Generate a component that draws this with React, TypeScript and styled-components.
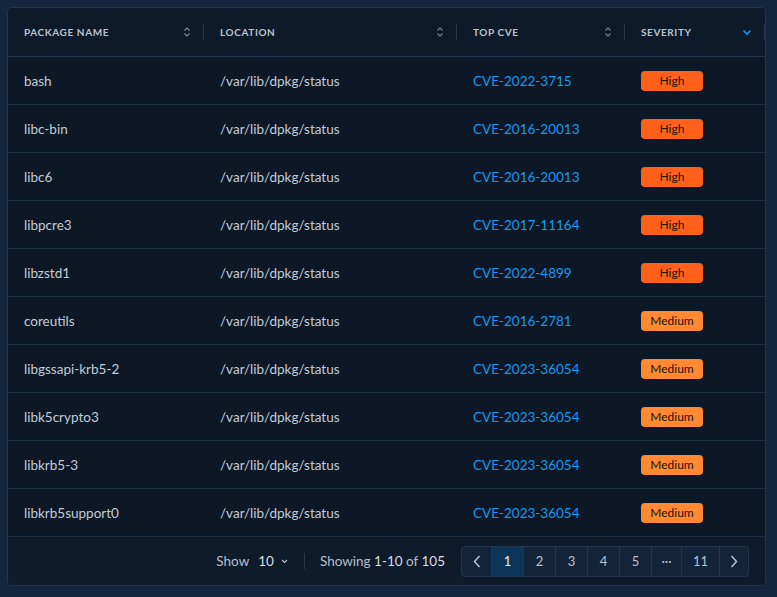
import React from "react";
import styled, { createGlobalStyle } from "styled-components";

const Global = createGlobalStyle`
  html, body { margin: 0; padding: 0; background: #14263d; }
  body { font-family: "Lato", "Noto Sans", sans-serif; }
`;

const Page = styled.div`
  padding: 7px 11px 12px 7px;
  width: 777px;
  height: 597px;
  box-sizing: border-box;
`;

const Card = styled.div`
  width: 759px;
  height: 579px;
  box-sizing: border-box;
  border: 1px solid #22344e;
  border-radius: 5px;
  background: #0c1826;
  overflow: hidden;
  display: flex;
  flex-direction: column;
`;

const Grid = styled.div`
  display: grid;
  grid-template-columns: 196px 253px 168px 1fr;
  box-sizing: border-box;
`;

const HeadRow = styled(Grid)`
  height: 49px;
  border-bottom: 1px solid #22344e;
  background: #0d1a2a;
`;

const HeadCell = styled.div`
  display: flex;
  align-items: center;
  padding-left: 16px;
  font-size: 10px;
  font-weight: 700;
  letter-spacing: 0.6px;
  color: #b9c3cf;
  text-transform: uppercase;
`;

const HeadLabel = styled.span`
  flex: 1;
`;

const Sep = styled.span`
  width: 1px;
  height: 16px;
  background: #26374d;
  margin-left: 12px;
`;

const SortIcon = styled.svg`
  width: 8px;
  height: 12px;
  flex: none;
`;

const Row = styled(Grid)`
  height: 48px;
  border-bottom: 1px solid #1f3049;
`;

const Cell = styled.div`
  display: flex;
  align-items: center;
  padding-left: 16px;
  font-size: 13.5px;
  color: #c3ccd6;
`;

const Link = styled.a`
  color: #1a98f0;
  text-decoration: none;
  font-size: 13.5px;
`;

const Badge = styled.span<{ $level: "High" | "Medium" }>`
  display: inline-flex;
  align-items: center;
  justify-content: center;
  width: 62px;
  height: 20px;
  border-radius: 4px;
  font-size: 12px;
  color: #1b1410;
  background: ${(p) => (p.$level === "High" ? "#ff611a" : "#ff8a33")};
`;

const Body = styled.div`
  flex: 1;
`;

const Footer = styled.div`
  height: 48px;
  display: flex;
  align-items: center;
  justify-content: flex-end;
  padding-right: 16px;
  background: #0e1b2b;
  color: #b4bfcb;
  font-size: 13.5px;
`;

const ShowBox = styled.div`
  display: flex;
  align-items: center;
  gap: 9px;
  padding-right: 16px;
  border-right: 1px solid #26374d;
  height: 16px;
`;

const ShowValue = styled.span`
  color: #d6dde5;
  display: inline-flex;
  align-items: center;
  gap: 7px;
`;

const Showing = styled.div`
  padding-left: 15px;
  padding-right: 16px;
  b {
    font-weight: 400;
    color: #d6dde5;
  }
`;

const Pager = styled.div`
  display: flex;
  height: 29px;
  border: 1px solid #22344e;
  border-radius: 4px;
  overflow: hidden;
  background: #132338;
`;

const PageBtn = styled.div<{ $w: number; $active?: boolean }>`
  width: ${(p) => p.$w}px;
  box-sizing: border-box;
  display: flex;
  align-items: center;
  justify-content: center;
  font-size: 13px;
  color: ${(p) => (p.$active ? "#e8eef5" : "#b7c1cd")};
  background: ${(p) => (p.$active ? "#0b3559" : "transparent")};
  & + & {
    border-left: 1px solid #22344e;
  }
`;

const Sort = () => (
  <SortIcon viewBox="0 0 8 12">
    <path d="M1.5 4.5 L4 2 L6.5 4.5 M1.5 7.5 L4 10 L6.5 7.5" fill="none" stroke="#7a8797" strokeWidth="1.2" />
  </SortIcon>
);

type R = { name: string; cve: string; sev: "High" | "Medium" };
const rows: R[] = [
  { name: "bash", cve: "CVE-2022-3715", sev: "High" },
  { name: "libc-bin", cve: "CVE-2016-20013", sev: "High" },
  { name: "libc6", cve: "CVE-2016-20013", sev: "High" },
  { name: "libpcre3", cve: "CVE-2017-11164", sev: "High" },
  { name: "libzstd1", cve: "CVE-2022-4899", sev: "High" },
  { name: "coreutils", cve: "CVE-2016-2781", sev: "Medium" },
  { name: "libgssapi-krb5-2", cve: "CVE-2023-36054", sev: "Medium" },
  { name: "libk5crypto3", cve: "CVE-2023-36054", sev: "Medium" },
  { name: "libkrb5-3", cve: "CVE-2023-36054", sev: "Medium" },
  { name: "libkrb5support0", cve: "CVE-2023-36054", sev: "Medium" },
];

export default function App() {
  return (
    <Page>
      <Global />
      <Card>
        <HeadRow>
          <HeadCell>
            <HeadLabel>Package Name</HeadLabel>
            <Sort />
            <Sep />
          </HeadCell>
          <HeadCell>
            <HeadLabel>Location</HeadLabel>
            <Sort />
            <Sep />
          </HeadCell>
          <HeadCell>
            <HeadLabel>Top CVE</HeadLabel>
            <Sort />
            <Sep />
          </HeadCell>
          <HeadCell>
            <HeadLabel>Severity</HeadLabel>
            <svg width="10" height="7" viewBox="0 0 10 7">
              <path d="M1.5 1.5 L5 5 L8.5 1.5" fill="none" stroke="#1a98f0" strokeWidth="1.6" />
            </svg>
            <Sep />
          </HeadCell>
        </HeadRow>
        <Body>
          {rows.map((r) => (
            <Row key={r.name}>
              <Cell>{r.name}</Cell>
              <Cell>/var/lib/dpkg/status</Cell>
              <Cell>
                <Link>{r.cve}</Link>
              </Cell>
              <Cell>
                <Badge $level={r.sev}>{r.sev}</Badge>
              </Cell>
            </Row>
          ))}
        </Body>
        <Footer>
          <ShowBox>
            <span>Show</span>
            <ShowValue>
              10
              <svg width="7" height="5" viewBox="0 0 7 5">
                <path d="M1 1 L3.5 3.5 L6 1" fill="none" stroke="#b7c1cd" strokeWidth="1.2" />
              </svg>
            </ShowValue>
          </ShowBox>
          <Showing>
            Showing <b>1-10</b> of <b>105</b>
          </Showing>
          <Pager>
            <PageBtn $w={29}>
              <svg width="8" height="13" viewBox="0 0 8 13">
                <path d="M6.5 1 L1.5 6.5 L6.5 12" fill="none" stroke="#b7c1cd" strokeWidth="1.5" />
              </svg>
            </PageBtn>
            <PageBtn $w={32} $active>1</PageBtn>
            <PageBtn $w={32}>2</PageBtn>
            <PageBtn $w={32}>3</PageBtn>
            <PageBtn $w={32}>4</PageBtn>
            <PageBtn $w={32}>5</PageBtn>
            <PageBtn $w={30}>···</PageBtn>
            <PageBtn $w={38}>11</PageBtn>
            <PageBtn $w={29}>
              <svg width="8" height="13" viewBox="0 0 8 13">
                <path d="M1.5 1 L6.5 6.5 L1.5 12" fill="none" stroke="#b7c1cd" strokeWidth="1.5" />
              </svg>
            </PageBtn>
          </Pager>
        </Footer>
      </Card>
    </Page>
  );
}
